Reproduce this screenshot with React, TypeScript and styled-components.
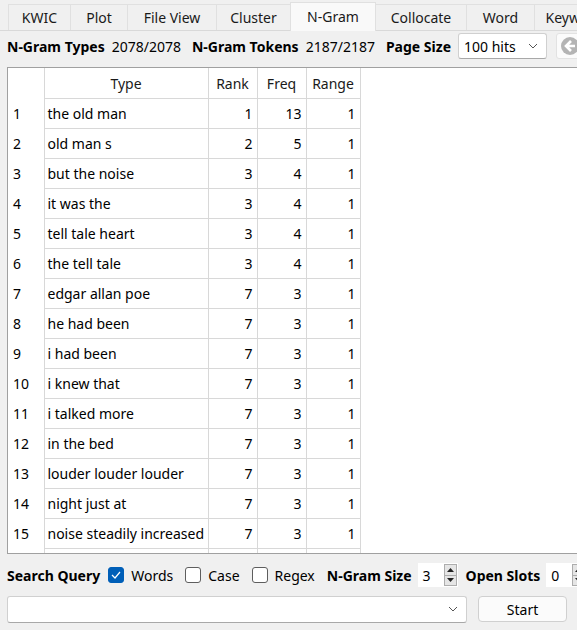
import React from "react";
import styled, { createGlobalStyle } from "styled-components";

const GlobalStyle = createGlobalStyle`
  html, body {
    margin: 0;
    padding: 0;
    background: #f0f0f0;
    overflow: hidden;
  }
  body {
    font-family: "Noto Sans", "Open Sans", sans-serif;
    font-size: 14px;
    color: #000;
  }
`;

const Window = styled.div`
  width: 577px;
  height: 630px;
  overflow: hidden;
  display: flex;
  flex-direction: column;
  background: #f0f0f0;
`;

const TabBar = styled.div`
  display: flex;
  align-items: flex-end;
  height: 30px;
  padding-left: 8px;
  border-bottom: 1px solid #d9d9d9;
  white-space: nowrap;
`;

const Tab = styled.div<{ $w: number; $active?: boolean }>`
  flex: 0 0 ${(p) => p.$w}px;
  height: ${(p) => (p.$active ? 29 : 26)}px;
  box-sizing: border-box;
  display: flex;
  align-items: center;
  justify-content: center;
  background: ${(p) => (p.$active ? "#f9f9f9" : "#f0f0f0")};
  border: 1px solid #e0e0e0;
  border-bottom: none;
  margin-right: -1px;
  margin-bottom: ${(p) => (p.$active ? -1 : 0)}px;
  position: relative;
  z-index: ${(p) => (p.$active ? 1 : 0)};
  color: #1a1a1a;
  padding-bottom: 1px;
`;

const Toolbar = styled.div`
  display: flex;
  align-items: center;
  height: 28px;
  margin-top: 1px;
  padding-left: 7px;
  white-space: nowrap;
`;

const Label = styled.span<{ $gap?: number }>`
  font-weight: 700;
  margin-right: ${(p) => p.$gap ?? 7}px;
`;

const Value = styled.span`
  margin-right: 11px;
`;

const Combo = styled.div<{ $w: number; $h?: number }>`
  flex: 0 0 ${(p) => p.$w}px;
  height: ${(p) => p.$h ?? 26}px;
  box-sizing: border-box;
  background: #fff;
  border: 1px solid #d0d0d0;
  border-bottom-color: #a8a8a8;
  border-radius: 3px;
  display: flex;
  align-items: center;
  justify-content: space-between;
  padding: 0 8px 0 5px;
`;

const NavButton = styled.div`
  flex: 0 0 30px;
  height: 26px;
  margin-left: 9px;
  box-sizing: border-box;
  background: #fbfbfb;
  border: 1px solid #e2e2e2;
  border-radius: 3px;
  display: flex;
  align-items: center;
  padding-left: 3px;
`;

const TableBox = styled.div`
  margin: 7px 0 0 7px;
  flex: 0 0 487px;
  box-sizing: border-box;
  background: #fff;
  border: 1px solid #a0a0a0;
  border-right: none;
  overflow: hidden;
`;

const Grid = styled.table`
  border-collapse: collapse;
  table-layout: fixed;
  width: 352px;
`;

const HeadCell = styled.th<{ $corner?: boolean }>`
  height: 30px;
  font-weight: 400;
  text-align: center;
  border-right: 1px solid #d8d8d8;
  border-bottom: ${(p) => (p.$corner ? "none" : "1px solid #d8d8d8")};
  padding: 0 4px;
  color: #1a1a1a;
  white-space: nowrap;
  overflow: hidden;
`;

const Cell = styled.td<{ $align?: string }>`
  height: 29px;
  text-align: ${(p) => p.$align ?? "right"};
  border-right: 1px solid #d8d8d8;
  border-bottom: 1px solid #d8d8d8;
  padding: 0 4px 0 3px;
  white-space: nowrap;
  overflow: hidden;
`;

const RowHead = styled.td`
  height: 29px;
  text-align: left;
  border-right: 1px solid #d8d8d8;
  padding: 0 5px;
`;

const QueryRow = styled.div`
  display: flex;
  align-items: center;
  flex: 0 0 24px;
  margin-top: 9px;
  padding-left: 7px;
  white-space: nowrap;
`;

const Check = styled.span<{ $on?: boolean }>`
  flex: 0 0 16px;
  height: 16px;
  box-sizing: border-box;
  border-radius: 3px;
  border: 1px solid ${(p) => (p.$on ? "#005fb8" : "#5e5e5e")};
  background: ${(p) => (p.$on ? "#005fb8" : "#fff")};
  display: flex;
  align-items: center;
  justify-content: center;
  margin-right: 7px;
`;

const CheckText = styled.span`
  margin-right: 12px;
`;

const Spin = styled.div`
  flex: 0 0 40px;
  height: 24px;
  box-sizing: border-box;
  background: #fff;
  display: flex;
  align-items: center;
  justify-content: space-between;
  padding-left: 5px;
  margin-right: 8px;
`;

const SpinArrows = styled.div`
  width: 13px;
  height: 22px;
  display: flex;
  flex-direction: column;
  border: 1px solid #adadad;
  box-sizing: border-box;
  margin-right: 1px;
`;

const SpinHalf = styled.div<{ $down?: boolean }>`
  flex: 1;
  background: #e5e5e5;
  display: flex;
  align-items: center;
  justify-content: center;
  border-top: ${(p) => (p.$down ? "1px solid #adadad" : "none")};
`;

const BottomRow = styled.div`
  display: flex;
  align-items: center;
  flex: 0 0 28px;
  margin-top: 8px;
  padding-left: 7px;
`;

const Button = styled.div`
  flex: 0 0 89px;
  height: 26px;
  box-sizing: border-box;
  margin-left: 11px;
  background: #fbfbfb;
  border: 1px solid #d0d0d0;
  border-radius: 4px;
  display: flex;
  align-items: center;
  justify-content: center;
`;

const Chevron = () => (
  <svg width="10" height="6" viewBox="0 0 10 6">
    <path d="M1 1 L5 5 L9 1" fill="none" stroke="#555" strokeWidth="1" />
  </svg>
);

const Tri = ({ down }: { down?: boolean }) => (
  <svg width="7" height="4" viewBox="0 0 7 4">
    <path d={down ? "M0 0 L7 0 L3.5 4 Z" : "M0 4 L7 4 L3.5 0 Z"} fill="#222" />
  </svg>
);

const Spinner = ({ value }: { value: string }) => (
  <Spin>
    <span>{value}</span>
    <SpinArrows>
      <SpinHalf>
        <Tri />
      </SpinHalf>
      <SpinHalf $down>
        <Tri down />
      </SpinHalf>
    </SpinArrows>
  </Spin>
);

const tabs: [string, number][] = [
  ["KWIC", 63],
  ["Plot", 58],
  ["File View", 90],
  ["Cluster", 75],
  ["N-Gram", 86],
  ["Collocate", 92],
  ["Word", 69],
  ["Keyword", 80],
];

const colWidths = [36, 164, 49, 49, 54];

const rows: [string, number, number, number][] = [
  ["the old man", 1, 13, 1],
  ["old man s", 2, 5, 1],
  ["but the noise", 3, 4, 1],
  ["it was the", 3, 4, 1],
  ["tell tale heart", 3, 4, 1],
  ["the tell tale", 3, 4, 1],
  ["edgar allan poe", 7, 3, 1],
  ["he had been", 7, 3, 1],
  ["i had been", 7, 3, 1],
  ["i knew that", 7, 3, 1],
  ["i talked more", 7, 3, 1],
  ["in the bed", 7, 3, 1],
  ["louder louder louder", 7, 3, 1],
  ["night just at", 7, 3, 1],
  ["noise steadily increased", 7, 3, 1],
  ["", 0, 0, 0],
];

export default function App() {
  return (
    <Window>
      <GlobalStyle />
      <TabBar>
        {tabs.map(([t, w]) => (
          <Tab key={t} $w={w} $active={t === "N-Gram"}>
            {t}
          </Tab>
        ))}
      </TabBar>

      <Toolbar>
        <Label>N-Gram Types</Label>
        <Value>2078/2078</Value>
        <Label>N-Gram Tokens</Label>
        <Value>2187/2187</Value>
        <Label>Page Size</Label>
        <Combo $w={89}>
          <span>100 hits</span>
          <Chevron />
        </Combo>
        <NavButton>
          <svg width="20" height="20" viewBox="0 0 20 20">
            <circle cx="10" cy="10" r="9" fill="#b4b4b4" />
            <path d="M11 5 L6 10 L11 15 M6.5 10 H15" fill="none" stroke="#fff" strokeWidth="2.6" />
          </svg>
        </NavButton>
      </Toolbar>

      <TableBox>
        <Grid>
          <colgroup>
            {colWidths.map((w, i) => (
              <col key={i} style={{ width: w }} />
            ))}
          </colgroup>
          <thead>
            <tr>
              <HeadCell $corner />
              <HeadCell>Type</HeadCell>
              <HeadCell>Rank</HeadCell>
              <HeadCell>Freq</HeadCell>
              <HeadCell>Range</HeadCell>
            </tr>
          </thead>
          <tbody>
            {rows.map(([type, rank, freq, range], i) => (
              <tr key={i}>
                <RowHead>{type ? i + 1 : ""}</RowHead>
                <Cell $align="left">{type}</Cell>
                <Cell>{type ? rank : ""}</Cell>
                <Cell>{type ? freq : ""}</Cell>
                <Cell>{type ? range : ""}</Cell>
              </tr>
            ))}
          </tbody>
        </Grid>
      </TableBox>

      <QueryRow>
        <Label $gap={8}>Search Query</Label>
        <Check $on>
          <svg width="10" height="8" viewBox="0 0 10 8">
            <path d="M1 4 L4 7 L9 1" fill="none" stroke="#fff" strokeWidth="1.2" />
          </svg>
        </Check>
        <CheckText>Words</CheckText>
        <Check />
        <CheckText>Case</CheckText>
        <Check />
        <CheckText>Regex</CheckText>
        <Label $gap={6}>N-Gram Size</Label>
        <Spinner value="3" />
        <Label $gap={6}>Open Slots</Label>
        <Spinner value="0" />
      </QueryRow>

      <BottomRow>
        <Combo $w={460} $h={27}>
          <span />
          <Chevron />
        </Combo>
        <Button>Start</Button>
        <Button />
      </BottomRow>
    </Window>
  );
}
